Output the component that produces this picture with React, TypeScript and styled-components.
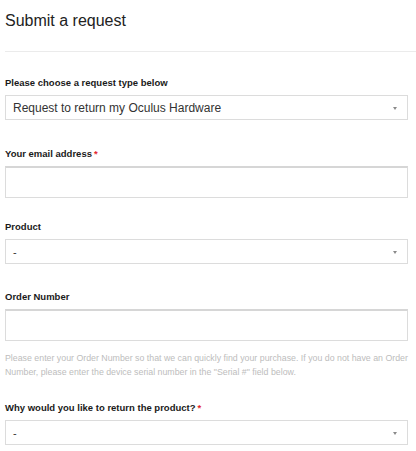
import React from 'react';
import styled, { createGlobalStyle } from 'styled-components';

const GlobalStyle = createGlobalStyle`
  body {
    margin: 0;
    background: #fff;
    font-family: "Liberation Sans", Arial, sans-serif;
  }
`;

const Page = styled.div`
  padding-left: 5px;
`;

const Title = styled.h1`
  margin: 11px 0 0;
  font-size: 16px;
  line-height: 20px;
  font-weight: normal;
  color: #222;
`;

const Divider = styled.hr`
  margin: 20px 0 0;
  border: none;
  border-top: 1px solid #ebebeb;
`;

const Form = styled.form`
  padding-right: 8px;
`;

const Field = styled.div<{ $gap: number }>`
  margin-top: ${(p) => p.$gap}px;
`;

const Label = styled.label`
  display: block;
  margin-bottom: 6px;
  font-size: 9.5px;
  line-height: 12px;
  font-weight: bold;
  color: #1a1a1a;
`;

const Required = styled.span`
  margin-left: 2px;
  color: #e3262e;
`;

const SelectBox = styled.div`
  box-sizing: border-box;
  height: 25px;
  display: flex;
  align-items: center;
  justify-content: space-between;
  padding: 0 10px 0 7px;
  border: 1px solid #dcdcdc;
  background: #fff;
  cursor: pointer;
`;

const SelectValue = styled.span<{ $muted?: boolean }>`
  font-size: ${(p) => (p.$muted ? '11px' : '12px')};
  color: #333;
`;

const Arrow = styled.span`
  width: 0;
  height: 0;
  margin-top: 1px;
  border-left: 2.5px solid transparent;
  border-right: 2.5px solid transparent;
  border-top: 3px solid #8a8a8a;
`;

const TextInput = styled.input`
  display: block;
  box-sizing: border-box;
  width: 100%;
  height: 32px;
  margin: 0;
  padding: 0 8px;
  border: 1px solid #dcdcdc;
  border-top-width: 2px;
  border-top-color: #d6d6d6;
  outline: none;
  font-family: inherit;
  font-size: 12px;
  background: #fff;
`;

const Hint = styled.p`
  margin: 10px 0 0;
  font-size: 8.8px;
  line-height: 14px;
  color: #bdbdbd;
`;

const Select = ({ value }: { value: string }) => (
  <SelectBox>
    <SelectValue $muted={value === '-'}>{value}</SelectValue>
    <Arrow />
  </SelectBox>
);

const App = () => {
  return (
    <Page>
      <GlobalStyle />
      <Title>Submit a request</Title>
      <Divider />
      <Form>
        <Field $gap={25}>
          <Label>Please choose a request type below</Label>
          <Select value="Request to return my Oculus Hardware" />
        </Field>
        <Field $gap={28}>
          <Label>
            Your email address<Required>*</Required>
          </Label>
          <TextInput type="email" />
        </Field>
        <Field $gap={23}>
          <Label>Product</Label>
          <Select value="-" />
        </Field>
        <Field $gap={27}>
          <Label>Order Number</Label>
          <TextInput type="text" />
          <Hint>
            Please enter your Order Number so that we can quickly find your purchase. If you do not have an Order
            Number, please enter the device serial number in the "Serial #" field below.
          </Hint>
        </Field>
        <Field $gap={23}>
          <Label>
            Why would you like to return the product?<Required>*</Required>
          </Label>
          <Select value="-" />
        </Field>
      </Form>
    </Page>
  );
};

export default App;
